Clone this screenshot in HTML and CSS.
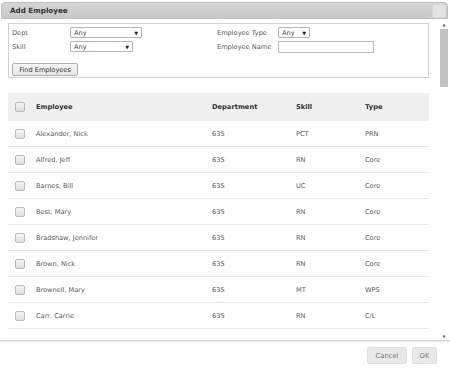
FILE: index.html
```html
<!DOCTYPE html>
<html>
<head>
<meta charset="utf-8">
<link rel="stylesheet" href="styles.css">
</head>
<body>
<div class="dialog">
  <div class="titlebar">
    <span class="title">Add Employee</span>
    <span class="close"></span>
  </div>
  <div class="main">
    <div class="content">
      <div class="filters">
        <div class="fgrid">
          <div class="col">
            <div class="frow"><span class="lbl lbl-left">Dept</span><span class="sel sel-dept"><span>Any</span><span class="arr">&#9660;</span></span></div>
            <div class="frow"><span class="lbl lbl-left">Skill</span><span class="sel sel-skill"><span>Any</span><span class="arr">&#9660;</span></span></div>
          </div>
          <div class="col col-right">
            <div class="frow"><span class="lbl lbl-right">Employee Type</span><span class="sel sel-type"><span>Any</span><span class="arr">&#9660;</span></span></div>
            <div class="frow"><span class="lbl lbl-right">Employee Name</span><span class="txt"></span></div>
          </div>
        </div>
        <button class="find">Find Employees</button>
      </div>
      <div class="table">
        <div class="tr th"><span class="cb"></span><span>Employee</span><span>Department</span><span>Skill</span><span>Type</span></div>
        <div class="tr"><span class="cb"></span><span>Alexander, Nick</span><span>635</span><span>PCT</span><span>PRN</span></div>
        <div class="tr"><span class="cb"></span><span>Alfred, Jeff</span><span>635</span><span>RN</span><span>Core</span></div>
        <div class="tr"><span class="cb"></span><span>Barnes, Bill</span><span>635</span><span>UC</span><span>Core</span></div>
        <div class="tr"><span class="cb"></span><span>Best, Mary</span><span>635</span><span>RN</span><span>Core</span></div>
        <div class="tr"><span class="cb"></span><span>Bradshaw, Jennifer</span><span>635</span><span>RN</span><span>Core</span></div>
        <div class="tr"><span class="cb"></span><span>Brown, Nick</span><span>635</span><span>RN</span><span>Core</span></div>
        <div class="tr"><span class="cb"></span><span>Brownell, Mary</span><span>635</span><span>MT</span><span>WPS</span></div>
        <div class="tr"><span class="cb"></span><span>Carr, Carrie</span><span>635</span><span>RN</span><span>C/L</span></div>
      </div>
    </div>
    <div class="scrollbar">
      <span class="sarrow">&#9650;</span>
      <div class="track"><div class="thumb"></div></div>
      <span class="sarrow">&#9660;</span>
    </div>
  </div>
  <div class="footer">
    <button class="btn">Cancel</button>
    <button class="btn">OK</button>
  </div>
</div>
</body>
</html>
```

FILE: styles.css
```css
html, body {
  margin: 0;
  padding: 0;
  background: #ffffff;
}
body {
  font-family: "DejaVu Sans", Verdana, sans-serif;
  font-size: 6.6px;
  color: #5a5a5a;
}
.dialog {
  width: 450px;
  height: 370px;
  display: flex;
  flex-direction: column;
  padding-top: 2px;
  box-sizing: border-box;
}
.titlebar {
  margin: 0 2px 0 1px;
  height: 17px;
  background: linear-gradient(#d6d6d6, #c8c8c8);
  border: 1px solid #c0c0c0;
  border-radius: 4px 4px 0 0;
  display: flex;
  align-items: center;
  justify-content: space-between;
  padding: 0 1px 0 8px;
  box-sizing: border-box;
  flex: none;
}
.title {
  font-weight: bold;
  font-size: 7.2px;
  color: #333;
}
.close {
  width: 14px;
  height: 14px;
  background: #e4e4e4;
  border: 1px solid #d8d8d8;
  border-radius: 2px;
  box-sizing: border-box;
}
.main {
  flex: none;
  height: 321px;
  display: flex;
  overflow: hidden;
  border-bottom: 1px solid #d6d6d6;
  box-shadow: 0 1px 1px #ececec;
}
.content {
  width: 421px;
  padding: 4px 10px 0 8px;
  overflow: hidden;
}
.filters {
  border: 1px solid #d2d2d2;
  height: 55px;
  box-sizing: border-box;
  padding: 3px 3px 0 3px;
  display: flex;
  flex-direction: column;
}
.fgrid {
  display: flex;
}
.col {
  width: 205px;
  display: flex;
  flex-direction: column;
  gap: 3px;
}
.col-right {
  width: auto;
}
.frow {
  display: flex;
  align-items: center;
  height: 11px;
}
.lbl {
  color: #5a5a5a;
}
.lbl-left { width: 58px; }
.lbl-right { width: 61px; }
.sel {
  height: 11px;
  border: 1px solid #b5b5b5;
  border-radius: 1px;
  box-sizing: border-box;
  display: flex;
  align-items: center;
  justify-content: space-between;
  padding: 0 3px 0 3px;
  background: #fff;
  color: #444;
}
.arr {
  font-size: 5px;
  color: #222;
}
.sel-dept { width: 72px; }
.sel-skill { width: 63px; }
.sel-type { width: 32px; }
.txt {
  width: 96px;
  height: 12px;
  border: 1px solid #bdbdbd;
  box-sizing: border-box;
  background: #fff;
}
.find {
  margin-top: 11px;
  align-self: flex-start;
  height: 13px;
  width: 66px;
  padding: 0;
  font-family: inherit;
  font-size: 6.6px;
  color: #333;
  background: linear-gradient(#f6f6f6, #e6e6e6);
  border: 1px solid #b0b0b0;
  border-radius: 2px;
}
.table {
  margin-top: 15px;
}
.tr {
  display: grid;
  grid-template-columns: 28px 176px 84px 69px 1fr;
  align-items: center;
  height: 26px;
  border-bottom: 1px solid #e8e8e8;
  box-sizing: border-box;
  color: #5a5a5a;
}
.tr .cb {
  margin-left: 7px;
}
.th {
  height: 28px;
  background: #f0f0f0;
  border-bottom: none;
  font-weight: bold;
  color: #333;
  font-size: 6.7px;
}
.cb {
  width: 10px;
  height: 10px;
  border: 1px solid #bcbcbc;
  border-radius: 2px;
  background: linear-gradient(#f4f4f4, #dedede);
  box-sizing: border-box;
}
.scrollbar {
  width: 10px;
  display: flex;
  flex-direction: column;
  align-items: center;
  padding-top: 2px;
}
.sarrow {
  font-size: 4px;
  color: #666;
  height: 7px;
  line-height: 7px;
}
.track {
  flex: 1;
  width: 8px;
}
.thumb {
  margin-top: 1px;
  height: 58px;
  background: #c1c1c1;
  width: 8px;
}
.footer {
  display: flex;
  justify-content: flex-end;
  gap: 5px;
  padding: 6px 13px 0 0;
}
.btn {
  height: 17px;
  padding: 0;
  font-family: inherit;
  font-size: 6.8px;
  color: #777;
  background: #e9e9e9;
  border: 1px solid #e0e0e0;
  border-radius: 2px;
}
.btn:first-child { width: 40px; }
.btn:last-child { width: 25px; }
```
